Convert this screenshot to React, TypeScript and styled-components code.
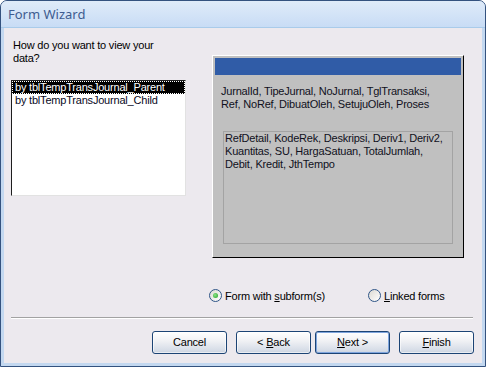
import React from 'react';
import styled, { createGlobalStyle } from 'styled-components';

const GlobalStyle = createGlobalStyle`
  html, body {
    margin: 0;
    padding: 0;
    background: #ffffff;
  }
  body {
    font-family: "Liberation Sans", Arial, sans-serif;
    font-size: 11px;
    letter-spacing: -0.2px;
  }
`;

const Window = styled.div`
  width: 486px;
  height: 367px;
  box-sizing: border-box;
  border: 1px solid #34527f;
  border-radius: 7px 7px 0 0;
  overflow: hidden;
  display: flex;
  flex-direction: column;
  background: #c3d8f0;
`;

const TitleBar = styled.div`
  height: 26px;
  flex: none;
  border-bottom: 1px solid #a9cbea;
  background: linear-gradient(#dfebf9, #c8dcf5);
  display: flex;
  align-items: center;
  padding-left: 7px;
  font-family: "Noto Sans", sans-serif;
  font-size: 13px;
  letter-spacing: 0;
  color: #3e5c90;
`;

const Frame = styled.div`
  flex: 1;
  display: flex;
  padding: 0 3px 3px;
`;

const Client = styled.div`
  flex: 1;
  background: #ece9ee;
  display: flex;
  flex-direction: column;
  color: #000;
`;

const Main = styled.div`
  height: 240px;
  display: grid;
  grid-template-columns: 208px 252px;
`;

const LeftColumn = styled.div`
  padding: 11px 0 0 7px;
  display: flex;
  flex-direction: column;
`;

const Question = styled.div`
  padding-left: 2px;
  line-height: 13px;
  white-space: pre-line;
`;

const ListBox = styled.div`
  margin-top: 15px;
  width: 175px;
  height: 116px;
  box-sizing: border-box;
  background: #ffffff;
  border: 1px solid;
  border-color: #1e1e1e #e2e2e2 #e2e2e2 #1e1e1e;
`;

const ListItem = styled.div<{ $selected?: boolean }>`
  height: 13px;
  line-height: 13px;
  padding-left: 3px;
  white-space: nowrap;
  background: ${p => (p.$selected ? '#000000' : 'transparent')};
  color: ${p => (p.$selected ? '#ffffff' : '#0a0a1e')};
  outline: ${p => (p.$selected ? '1px dotted #ffffff' : 'none')};
  outline-offset: -1px;
`;

const Preview = styled.div`
  margin-top: 27px;
  height: 203px;
  box-sizing: border-box;
  background: #c0c0c0;
  border: 1px solid;
  border-color: #ffffff #000000 #000000 #ffffff;
  padding: 2px;
  display: flex;
  flex-direction: column;
`;

const PreviewBar = styled.div`
  height: 17px;
  background: #305ca7;
`;

const ParentFields = styled.div`
  margin: 10px 0 0 6px;
  line-height: 13px;
  white-space: pre-line;
  color: #101020;
`;

const ChildBox = styled.div`
  margin: 20px 8px 0 8px;
  height: 113px;
  box-sizing: border-box;
  border: 1px solid #a3a3a3;
  padding: 0 0 0 1px;
  line-height: 13px;
  white-space: pre-line;
  color: #101020;
`;

const Options = styled.div`
  margin-top: 21px;
  height: 13px;
  padding-left: 205px;
  display: grid;
  grid-template-columns: 159px auto;
  align-items: center;
`;

const RadioLabel = styled.label`
  display: flex;
  align-items: center;
  gap: 3px;
  white-space: nowrap;
`;

const RadioCircle = styled.span<{ $checked?: boolean }>`
  width: 13px;
  height: 13px;
  box-sizing: border-box;
  border-radius: 50%;
  border: 1px solid #2f5587;
  background: linear-gradient(135deg, #dcdad3, #ffffff);
  display: flex;
  align-items: center;
  justify-content: center;
  &::after {
    content: '';
    display: ${p => (p.$checked ? 'block' : 'none')};
    width: 5px;
    height: 5px;
    border-radius: 50%;
    background: radial-gradient(circle at 40% 40%, #8de38a, #21a121);
  }
`;

const Separator = styled.div`
  margin: 15px 9px 0 7px;
  height: 0;
  border-top: 1px solid #a2a2a2;
  border-bottom: 1px solid #ffffff;
`;

const ButtonRow = styled.div`
  margin-top: 12px;
  padding-right: 8px;
  display: flex;
  justify-content: flex-end;
`;

const Button = styled.button<{ $gap?: number; $default?: boolean }>`
  margin-left: ${p => p.$gap ?? 0}px;
  width: 75px;
  height: 23px;
  box-sizing: border-box;
  border: 1px solid #1c4475;
  border-radius: 3px;
  background: linear-gradient(#ffffff 0%, #f1f2f5 40%, #d4dbe6 90%, #c8d0dd 100%);
  box-shadow: ${p => (p.$default ? 'inset 0 0 0 1px #7fa5dd' : 'inset 0 0 0 1px rgba(255,255,255,0.6)')};
  font-family: "Liberation Sans", Arial, sans-serif;
  font-size: 11px;
  letter-spacing: -0.2px;
  color: #000;
  padding: 0;
  line-height: 21px;
  u {
    text-decoration: underline;
  }
`;

export default function App() {
  return (
    <>
      <GlobalStyle />
      <Window>
        <TitleBar>Form Wizard</TitleBar>
        <Frame>
          <Client>
            <Main>
              <LeftColumn>
                <Question>{'How do you want to view your\ndata?'}</Question>
                <ListBox>
                  <ListItem $selected>by tblTempTransJournal_Parent</ListItem>
                  <ListItem>by tblTempTransJournal_Child</ListItem>
                </ListBox>
              </LeftColumn>
              <Preview>
                <PreviewBar />
                <ParentFields>
                  {'JurnalId, TipeJurnal, NoJurnal, TglTransaksi,\nRef, NoRef, DibuatOleh, SetujuOleh, Proses'}
                </ParentFields>
                <ChildBox>
                  {'RefDetail, KodeRek, Deskripsi, Deriv1, Deriv2,\nKuantitas, SU, HargaSatuan, TotalJumlah,\nDebit, Kredit, JthTempo'}
                </ChildBox>
              </Preview>
            </Main>
            <Options>
              <RadioLabel>
                <RadioCircle $checked />
                <span>Form with <u>s</u>ubform(s)</span>
              </RadioLabel>
              <RadioLabel>
                <RadioCircle />
                <span><u>L</u>inked forms</span>
              </RadioLabel>
            </Options>
            <Separator />
            <ButtonRow>
              <Button>Cancel</Button>
              <Button $gap={9}>&lt; <u>B</u>ack</Button>
              <Button $gap={4} $default><u>N</u>ext &gt;</Button>
              <Button $gap={9}><u>F</u>inish</Button>
            </ButtonRow>
          </Client>
        </Frame>
      </Window>
    </>
  );
}
